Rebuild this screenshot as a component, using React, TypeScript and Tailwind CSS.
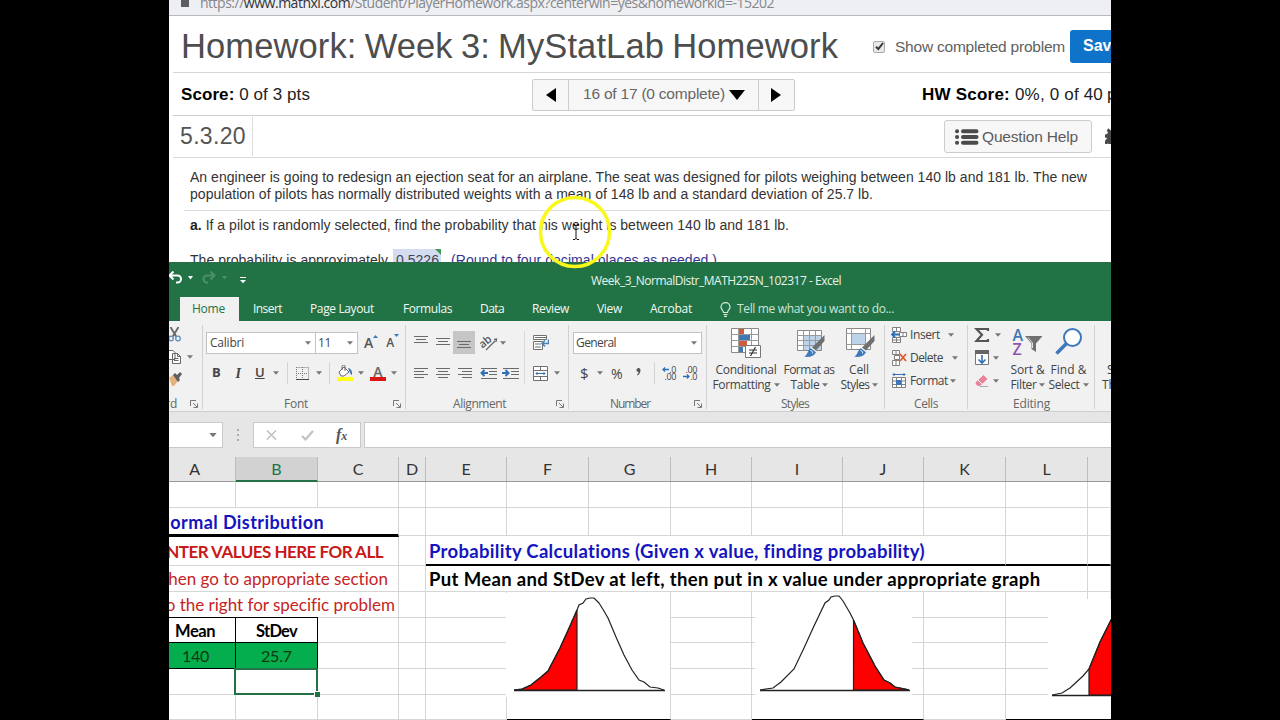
import { useLayoutEffect, useRef, type ReactNode } from "react";

type Kids = { children?: ReactNode };

/* Text set to an exact advance width by adjusting its tracking. */
function Fit({ w, className = "", children }: Kids & { w: number; className?: string }) {
  const ref = useRef<HTMLSpanElement>(null);
  useLayoutEffect(() => {
    const el = ref.current;
    if (!el) return;
    el.style.letterSpacing = "0px";
    const natural = el.getBoundingClientRect().width;
    const count = (el.textContent ?? "").length || 1;
    el.style.letterSpacing = `${(w - natural) / count}px`;
  }, [w]);
  return (
    <span ref={ref} className={`inline-block shrink-0 whitespace-pre ${className}`}>
      {children}
    </span>
  );
}

function Caret({ className = "" }: { className?: string }) {
  return (
    <svg className={`shrink-0 ${className}`} width="6" height="4" viewBox="0 0 6 4">
      <path d="M0 .3h6L3 3.7z" fill="#777" />
    </svg>
  );
}

function Launcher() {
  return (
    <svg className="mt-[2px] shrink-0" width="8" height="8" viewBox="0 0 8 8" fill="none" stroke="#777">
      <path d="M.5 6V.5H6M3 3l4 4M7.5 3.5v4h-4" />
    </svg>
  );
}

function Lines({ rows, w = 14 }: { rows: [number, number][]; w?: number }) {
  return (
    <svg className="shrink-0" width={w} height="12" viewBox={`0 0 ${w} 12`} stroke="#6a6a6a">
      {rows.map(([a, b], i) => (
        <path key={i} d={`M${a} ${i * 3 + 1.5}H${b}`} />
      ))}
    </svg>
  );
}

function Group({ className, children }: Kids & { className: string }) {
  return <div className={`flex h-[84px] shrink-0 flex-col border-r border-[#d2d2d2] ${className}`}>{children}</div>;
}

function AddressBar() {
  return (
    <div className="flex h-4 items-end overflow-hidden border-b border-[#b9babd] bg-[#eeeff3] pl-3">
      <div className="mb-[8px] h-[7px] w-[8px] bg-[#5c5e63]" />
      <Fit w={574} className="mb-[2px] ml-[11px] h-[20px] font-['Open_Sans',sans-serif] text-[14px] leading-[20px] text-[#85878b]">
        https://<span className="text-[#333]">www.mathxl.com</span>/Student/PlayerHomework.aspx?centerwin=yes&amp;homeworkid=-15202
      </Fit>
    </div>
  );
}

function HomeworkPage() {
  return (
    <div className="h-[246px] overflow-hidden bg-white font-['Liberation_Sans',sans-serif]">
      <div className="ml-1 flex h-[57px] items-center border-b border-[#d6d6d6] pl-[8px]">
        <Fit w={657} className="mt-[4px] text-[34.5px] leading-[40px] text-[#4d4d4d] [word-spacing:-1.5px]">Homework: Week 3: MyStatLab Homework</Fit>
        <div className="ml-[35px] mt-[5px] flex h-[12px] w-[12px] shrink-0 items-center justify-center rounded-[2px] border border-[#aaa] bg-[#e9e9e9]">
          <svg width="9" height="9" viewBox="0 0 9 9" fill="none" stroke="#333" strokeWidth="2">
            <path d="M1 4.8 3.3 7 8 1" />
          </svg>
        </div>
        <Fit w={170} className="ml-[10px] mt-[6px] text-[15.5px] text-[#606060]">Show completed problem</Fit>
        <div className="ml-[5px] mt-[4px] flex h-[33px] w-[80px] shrink-0 items-center rounded-[3px] bg-[#0f73c9] pl-[13px] text-[16px] font-bold text-white">
          Save
        </div>
      </div>
      <div className="ml-1 flex h-[43px] items-center border-b border-[#cfcfcf] pl-[8px] text-[17px] text-black">
        <Fit w={129} className="mt-px text-[#222]"><b className="text-black">Score:</b> 0 of 3 pts</Fit>
        <div className="ml-[222px] mt-px flex h-[32px] w-[263px] shrink-0 rounded-[2px] border border-[#ccc] bg-[#f7f7f7]">
          <div className="flex w-[36px] items-center justify-center border-r border-[#ccc] pl-px">
            <svg width="10" height="14" viewBox="0 0 10 14"><path d="M10 0v14L0 7z" /></svg>
          </div>
          <div className="flex w-[190px] items-center border-r border-[#ccc] pl-[14px]">
            <Fit w={142} className="-mt-px text-[15.5px] leading-[18px] text-[#666]">16 of 17 (0 complete)</Fit>
            <svg className="ml-[4px]" width="16" height="10" viewBox="0 0 16 10"><path d="M0 0h16L8 10z" /></svg>
          </div>
          <div className="flex flex-1 items-center justify-center">
            <svg width="10" height="14" viewBox="0 0 10 14"><path d="M0 0v14l10-7z" /></svg>
          </div>
        </div>
        <Fit w={88} className="ml-[127px] mt-px font-bold">HW Score:</Fit>
        <Fit w={88} className="ml-[5px] mt-px text-[#222]">0%, 0 of 40</Fit>
        <span className="ml-[4px] mt-px text-[#222]">pts</span>
      </div>
      <div className="ml-1 flex h-[42px] items-center border-b border-[#dadada] pl-[7px]">
        <Fit w={66} className="-mt-[2px] text-[23px] leading-[28px] text-[#555]">5.3.20</Fit>
        <div className="ml-[6px] h-[39px] w-px shrink-0 bg-[#ddd]" />
        <div className="ml-[691px] flex h-[33px] w-[148px] shrink-0 items-center rounded-[3px] border border-[#ccc] bg-[#f7f7f7] pl-[10px]">
          <svg width="24" height="16" viewBox="0 0 24 16" stroke="#4a4a4a" strokeWidth="4" strokeLinecap="round">
            <path d="M2 2.3h.1M8 2.3h13.5M2 8h.1M8 8h13.5M2 13.7h.1M8 13.7h13.5" />
          </svg>
          <Fit w={96} className="ml-[3px] text-[15.5px] leading-[20px] text-[#5c5c5c]">Question Help</Fit>
        </div>
        <svg className="-mt-px ml-[13px] shrink-0" width="16" height="16" viewBox="0 0 16 16" fill="#4a4a4a">
          <path d="M6.5 0h3l.4 2.2 2 .8 1.8-1.2 2 2-1.2 1.9.8 2 .7.1v3l-2 .4-.8 2 1.200 1.700-2 2-1.900-1.200-2 .8-.4 2h-3l-.5-2.200-2-.8-1.700 1.200-2-2 1.200-1.900L2.200 9.900 0 9.500v-3L2.200 6 2.900 4.200 1.700 2.300l2-2L5.500 2.500z" />
        </svg>
      </div>
      <div className="pt-[11px] text-[14px] leading-[17px] text-[#333]">
        <div className="pl-[21px]"><Fit w={897}>An engineer is going to redesign an ejection seat for an airplane. The seat was designed for pilots weighing between 140 lb and 181 lb. The new</Fit></div>
        <div className="pl-[21px]"><Fit w={683}>population of pilots has normally distributed weights with a mean of 148 lb and a standard deviation of 25.7 lb.</Fit></div>
        <div className="ml-[15px] mt-[7px] h-px bg-[#dcdcdc]" />
        <div className="mt-[6px] pl-[21px]"><Fit w={599}><b className="text-[#222]">a.</b> If a pilot is randomly selected, find the probability that his weight is between 140 lb and 181 lb.</Fit></div>
        <div className="mt-[15px] flex pl-[21px]">
          <Fit w={198} className="mt-[3px]">The probability is approximately</Fit>
          <div className="ml-[5px] flex h-[20px] w-[48px] justify-between bg-[#d3ddef] pl-[3px]">
            <Fit w={43} className="mt-[3px] text-[#445]">0.5226</Fit>
            <svg className="-ml-1 shrink-0" width="6" height="6" viewBox="0 0 6 6"><path d="M0 0h6v6z" fill="#3f9a55" /></svg>
          </div>
          <Fit w={266} className="ml-[10px] mt-[3px] text-[#34348e]">(Round to four decimal places as needed.)</Fit>
        </div>
      </div>
    </div>
  );
}

function TitleBar() {
  return (
    <div className="flex h-[35px] items-start border-t border-[#2c6a49] bg-[#217346] text-white">
      <svg className="-ml-px mt-[8px] shrink-0" width="15" height="13" viewBox="0 0 15 13" fill="none" stroke="#fff" strokeWidth="2">
        <path d="M5.500 .5 1.500 4.500l4 4M2 4.500h7.500a3.500 3.500 0 0 1 0 7H8" />
      </svg>
      <svg className="ml-[5px] mt-[13px]" width="5" height="4" viewBox="0 0 5 4"><path d="M0 0h5L2.500 3.500z" fill="#fff" /></svg>
      <svg className="ml-[9px] mt-[8px]" width="14" height="13" viewBox="0 0 14 13" fill="none" stroke="#4d9068" strokeWidth="2">
        <path d="m8.500 .5 4 4-4 4M12 4.500H5a3.500 3.500 0 0 0 0 7h1" />
      </svg>
      <svg className="ml-[6px] mt-[13px]" width="5" height="4" viewBox="0 0 5 4"><path d="M0 0h5L2.500 3.500z" fill="#4d9068" /></svg>
      <svg className="ml-[13px] mt-[14px]" width="6" height="7" viewBox="0 0 6 7" fill="#fff"><path d="M0 0h6v1H0zM0 3h6L3 6.300z" /></svg>
      <Fit w={250} className="ml-[345px] mt-[9px] text-[12px] leading-[18px] text-[#eaf3ed]">Week_3_NormalDistr_MATH225N_102317 - Excel</Fit>
    </div>
  );
}

function RibbonTabs() {
  return (
    <div className="flex h-[24px] items-center bg-[#217346] pl-[11px] text-[12px] leading-[18px] text-[#f3f8f5]">
      <div className="flex h-full w-[59px] items-center bg-[#f1f1f1] pl-[12px] text-[#217346]"><Fit w={33}>Home</Fit></div>
      <Fit w={29} className="ml-[14px]">Insert</Fit>
      <Fit w={64} className="ml-[28px]">Page Layout</Fit>
      <Fit w={49} className="ml-[29px]">Formulas</Fit>
      <Fit w={24} className="ml-[28px]">Data</Fit>
      <Fit w={37} className="ml-[28px]">Review</Fit>
      <Fit w={25} className="ml-[28px]">View</Fit>
      <Fit w={42} className="ml-[28px]">Acrobat</Fit>
      <svg className="ml-[28px] shrink-0" width="11" height="15" viewBox="0 0 11 15" fill="none" stroke="#d8eadf" strokeWidth="1.200">
        <path d="M3.500 10.500c0-2-2.500-2.800-2.500-5.400a4.500 4.500 0 0 1 9 0c0 2.600-2.500 3.400-2.500 5.400zM3.500 12.500h4M4 14.300h3" />
      </svg>
      <Fit w={157} className="ml-[6px] text-[#cfe3d7]">Tell me what you want to do...</Fit>
    </div>
  );
}

function ClipboardGroup() {
  return (
    <Group className="w-[34px]">
      <svg className="mt-[2px] shrink-0" width="13" height="15" viewBox="0 0 13 15" fill="none">
        <path d="m1.500 0 6 10M9.500 0l-6 10" stroke="#666" strokeWidth="1.800" />
        <circle cx="2" cy="11.500" r="2.300" stroke="#5f8fbf" strokeWidth="1.300" />
        <circle cx="9" cy="11.500" r="2.300" stroke="#5f8fbf" strokeWidth="1.300" />
      </svg>
      <div className="mt-[8px] flex items-center">
        <svg width="12" height="14" viewBox="0 0 12 14" fill="#fff" stroke="#666">
          <path d="M-1 .5h5l2 2v7h-7zM3.500 3.500h5l3 3v7h-8zM8.500 3.500v3h3M5 8.500h4.500M5 10.500h4.500" />
        </svg>
        <Caret className="ml-[6px]" />
      </div>
      <svg className="mt-[8px]" width="13" height="14" viewBox="0 0 13 14">
        <path d="m0 6 4-3 5 6-4 5H3z" fill="#e5b27c" />
        <path d="m4 3 2-2 2 2 3-3 2 2-3 4 1 2-2 2z" fill="#5e5e5e" />
      </svg>
      <div className="mt-auto flex h-[12px] items-center justify-between pr-[4px]">
        <span className="-ml-[4px] leading-[13px]">rd</span>
        <Launcher />
      </div>
    </Group>
  );
}

function FontGroup() {
  return (
    <Group className="w-[203px] pl-[3px] pt-[7px]">
      <div className="flex h-[22px] items-center">
        <div className="flex h-full w-[110px] items-center justify-between border border-[#c3c3c3] bg-white pl-[3px] pr-[4px] text-[#444]"><Fit w={34}>Calibri</Fit><Caret /></div>
        <div className="-ml-px flex h-full w-[43px] items-center justify-between border border-[#c3c3c3] bg-white pl-[2px] pr-[4px] text-[#444]"><Fit w={13}>11</Fit><Caret /></div>
        <div className="ml-[6px] flex items-start text-[#555]">
          <span className="text-[14px] font-semibold leading-[22px]">A</span>
          <svg className="mt-[3px] shrink-0" width="5" height="3" viewBox="0 0 5 3"><path d="M0 3h5L2.500 0z" fill="#3f76b5" /></svg>
        </div>
        <div className="ml-[8px] flex items-start text-[#555]">
          <span className="text-[12px] font-semibold leading-[24px]">A</span>
          <svg className="mt-[3px] shrink-0" width="5" height="3" viewBox="0 0 5 3"><path d="M0 0h5L2.500 3z" fill="#3f76b5" /></svg>
        </div>
      </div>
      <div className="mt-[8px] flex h-[22px] items-center text-[13px] text-[#444]">
        <b className="ml-[6px] w-[20px]">B</b>
        <i className="w-[23px] font-['Liberation_Serif',serif] text-[14px] font-bold">&nbsp;I</i>
        <span className="w-[9px] font-semibold underline">U</span>
        <Caret className="ml-[9px]" />
        <div className="ml-[8px] h-full w-px bg-[#d4d4d4]" />
        <svg className="ml-[8px] shrink-0" width="13" height="13" viewBox="0 0 13 13" fill="none" stroke="#777">
          <path d="M.5.500h12v12M.5 0v12M6.500 0v12M0 6.500h12" strokeDasharray="1 1" />
          <path d="M0 12.500h13" stroke="#444" />
        </svg>
        <Caret className="ml-[7px]" />
        <div className="ml-[7px] h-full w-px bg-[#d4d4d4]" />
        <svg className="ml-[7px] shrink-0" width="16" height="16" viewBox="0 0 16 16">
          <path d="m2 7 5-5 5 5-5 4H4z" fill="#fff" stroke="#666" />
          <path d="M5 5V1.500a1.500 1.500 0 0 1 3 0V6" fill="none" stroke="#666" />
          <path d="M11 3c3 .5 4.500 3 4 7-2-.5-2-3-4-7z" fill="#3c76b4" />
          <path d="M0 12h16v4H0z" fill="#ffff1a" />
        </svg>
        <Caret className="ml-[5px]" />
        <div className="ml-[6px] flex w-[16px] shrink-0 flex-col items-center">
          <span className="h-[12px] text-[14px] font-semibold leading-[13px] text-[#666]">A</span>
          <div className="h-[4px] w-[16px] bg-[#dc1414]" />
        </div>
        <Caret className="ml-[5px]" />
      </div>
      <div className="mt-auto flex h-[12px] items-center pl-[78px] pr-[4px] leading-[13px]">
        <Fit w={24}>Font</Fit><span className="ml-auto flex"><Launcher /></span>
      </div>
    </Group>
  );
}

function AlignmentGroup() {
  return (
    <Group className="w-[163px] pl-[7px] pt-[6px]">
      <div className="flex">
        <div className="w-[112px] border-r border-[#dadada]">
          <div className="flex h-[23px] items-center">
            <div className="ml-px -mt-[3px]"><Lines rows={[[0, 14], [2, 12], [0, 14]]} /></div>
            <div className="ml-[8px]"><Lines rows={[[0, 14], [2, 12], [0, 14]]} /></div>
            <div className="ml-[3px] flex h-[23px] w-[22px] items-center justify-center bg-[#c6c6c6] pt-[7px]"><Lines rows={[[0, 14], [2, 12], [0, 14]]} /></div>
            <svg className="ml-[5px] shrink-0" width="18" height="16" viewBox="0 0 18 16">
              <text x="0" y="11" fontSize="11" fontWeight="600" fill="#555" transform="rotate(-40 5 9)" className="font-['Open_Sans',sans-serif]">ab</text>
              <path d="m6 15 9-9m-1-1.500 2.500-.5L16 7" fill="none" stroke="#666" strokeWidth="1.300" />
            </svg>
            <Caret className="ml-[2px]" />
          </div>
          <div className="mt-[8px] flex h-[22px] items-center">
            <div className="ml-px"><Lines rows={[[0, 14], [0, 10], [0, 14], [0, 10]]} /></div>
            <div className="ml-[8px]"><Lines rows={[[0, 14], [2, 12], [0, 14], [2, 12]]} /></div>
            <div className="ml-[8px]"><Lines rows={[[0, 14], [4, 14], [0, 14], [4, 14]]} /></div>
            <svg className="ml-[8px] shrink-0" width="17" height="13" viewBox="0 0 17 13" fill="none" stroke="#6a6a6a">
              <path d="M1 1.500h16M9 4.500h8M9 7.500h8M1 11.500h16" /><path d="M8 6H1.500M4.500 3 1.500 6l3 3" stroke="#2f6fb5" strokeWidth="2" />
            </svg>
            <svg className="ml-[5px] shrink-0" width="17" height="13" viewBox="0 0 17 13" fill="none" stroke="#6a6a6a">
              <path d="M1 1.500h16M9 4.500h8M9 7.500h8M1 11.500h16" /><path d="M0 6h6.500M3.500 3l3 3-3 3" stroke="#2f6fb5" strokeWidth="2" />
            </svg>
          </div>
        </div>
        <div className="pl-[8px]">
          <div className="flex h-[23px] items-center">
            <svg width="16" height="16" viewBox="0 0 16 16" fill="#fff" stroke="#707070">
              <path d="M.5.500h13v4H.500zM.5 6.500h9v8H.500zM2 2.500h12M2 9h6M2 12h6" />
              <path d="M15.500 4.500v4h-6m2.500-3-3 3 3 3" fill="none" stroke="#4a80b8" strokeWidth="1.500" />
            </svg>
          </div>
          <div className="mt-[8px] flex h-[22px] items-center">
            <svg width="15" height="15" viewBox="0 0 15 15" fill="#fff" stroke="#707070">
              <path d="M.5.500h14v14H.500zM.5 4.500h14M.5 10.500h14M7.500.5v4M7.500 10.500v4" />
              <path d="M3 7.500h9M4.500 6 3 7.500 4.500 9M10.500 6 12 7.500 10.500 9" fill="none" stroke="#2f6fb5" />
            </svg>
            <Caret className="ml-[6px]" />
          </div>
        </div>
      </div>
      <div className="mt-auto flex h-[12px] items-center pl-[40px] pr-[4px] leading-[13px]">
        <Fit w={53}>Alignment</Fit><span className="ml-auto flex"><Launcher /></span>
      </div>
    </Group>
  );
}

function DecimalIcon({ decrease = false }: { decrease?: boolean }) {
  return (
    <span className="flex w-[15px] shrink-0 flex-col text-[9px] leading-[7px] tracking-[-0.4px] text-[#444]">
      <span className="flex h-[7px] items-center justify-end">
        {!decrease && <svg width="7" height="5" viewBox="0 0 7 5" fill="none" stroke="#2f6fb5" strokeWidth="1.300"><path d="M7 2.500H1M3 .5l-2 2 2 2" /></svg>}
        {decrease ? ".00" : ".0"}
      </span>
      <span className="flex h-[7px] items-center justify-end">
        {decrease && <svg width="7" height="5" viewBox="0 0 7 5" fill="none" stroke="#2f6fb5" strokeWidth="1.300"><path d="M0 2.500h6M4 .5l2 2-2 2" /></svg>}
        {decrease ? ".0" : ".00"}
      </span>
    </span>
  );
}

function NumberGroup() {
  return (
    <Group className="w-[138px] pl-[4px] pt-[7px]">
      <div className="flex h-[22px] w-[129px] items-center justify-between border border-[#c3c3c3] bg-white pl-[2px] pr-[4px] text-[#444]"><Fit w={40}>General</Fit><Caret /></div>
      <div className="mt-[8px] flex h-[22px] items-center text-[#444]">
        <span className="ml-[7px] w-[10px] text-[15px]">$</span>
        <Caret className="ml-[7px]" />
        <Fit w={13} className="ml-[8px] text-[14px]">%</Fit>
        <svg className="ml-[12px] -mt-[2px] shrink-0" width="5" height="8" viewBox="0 0 5 8"><path d="M.5 2a2 2 0 1 1 4 0c0 2.500-1 4.500-3 5.500L1 6.700C2 6 2.500 5 2.500 4 1.300 4 .5 3.200.5 2z" fill="#555" /></svg>
        <div className="ml-[13px] h-full w-px bg-[#d4d4d4]" />
        <div className="ml-[6px]"><DecimalIcon /></div>
        <div className="ml-[6px]"><DecimalIcon decrease /></div>
      </div>
      <div className="mt-auto flex h-[12px] items-center pl-[37px] pr-[4px] leading-[13px]">
        <Fit w={40}>Number</Fit><span className="ml-auto flex"><Launcher /></span>
      </div>
    </Group>
  );
}

function BrushOverlay() {
  return (
    <>
      <path d="M28.500 7v6l-9 10-4-3z" fill="#707070" />
      <path d="M8 28.500c4-1 3-6 7-8.500l5 4c-2 5-8 5.500-12 4.500z" fill="#3c78ba" />
      <path d="m15 19.500 5 4" stroke="#f1f1f1" strokeWidth="1.500" />
      <path d="M14.500 22.500c1.500.5 2.500 1 2 3" fill="none" stroke="#fff" />
    </>
  );
}

function StylesGroup() {
  return (
    <Group className="w-[178px] pl-[5px] pt-[3px]">
      <div className="flex text-[#444]">
        <div className="flex w-[68px] flex-col items-center">
          <svg width="30" height="30" viewBox="0 0 30 30" className="shrink-0">
            <path d="M.5.500h27v24H.500z" fill="#fff" stroke="#888" />
            <path d="M.5 6.500h27M.5 12.500h27M.5 18.500h27M7.500.5v24M20.500.5v24" stroke="#999" />
            <path d="M8 1h5v5H8zM8 13h8v5H8z" fill="#cf5a3c" />
            <path d="M8 7h11v5H8zM8 19h4v5H8z" fill="#3f78b4" />
            <path d="M14.500 17.500h15v12h-15z" fill="#fff" stroke="#777" />
            <path d="M18 22h8M18 25h8M24.500 19l-5 9" stroke="#333" strokeWidth="1.200" />
          </svg>
          <Fit w={61} className="mt-[4px] h-[15px] leading-[15px]">Conditional</Fit>
          <span className="flex h-[15px] items-center leading-[15px]"><Fit w={58}>Formatting</Fit><Caret className="ml-[3px]" /></span>
        </div>
        <div className="flex w-[58px] flex-col items-center">
          <svg width="30" height="30" viewBox="0 0 30 30" className="ml-[3px] shrink-0">
            <path d="M1.500 2.500h24v20h-24z" fill="#fff" stroke="#888" />
            <path d="M8 8h17v14H8z" fill="#bcd3ea" />
            <path d="M1.500 7.500h24M1.500 12.500h24M1.500 17.500h24M7.500 2.500v20M13.500 2.500v20M19.500 2.500v20" stroke="#9a9a9a" />
            <BrushOverlay />
          </svg>
          <Fit w={51} className="mt-[4px] h-[15px] leading-[15px]">Format as</Fit>
          <span className="flex h-[15px] items-center leading-[15px]"><Fit w={29}>Table</Fit><Caret className="ml-[2px]" /></span>
        </div>
        <div className="flex w-[42px] flex-col items-center">
          <svg width="30" height="30" viewBox="0 0 30 30" className="ml-[3px] shrink-0">
            <path d="M.5.500h24v21H.500z" fill="#fff" stroke="#888" />
            <path d="M.5 5.500h24M.5 16.500h24M5.500.5v21M19.500.5v21" stroke="#9a9a9a" />
            <path d="M6 6h13v10H6z" fill="#bcd3ea" />
            <BrushOverlay />
          </svg>
          <Fit w={20} className="mt-[4px] h-[15px] leading-[15px]">Cell</Fit>
          <span className="flex h-[15px] items-center leading-[15px]"><Fit w={29}>Styles</Fit><Caret className="ml-[2px]" /></span>
        </div>
      </div>
      <div className="mt-auto flex h-[12px] justify-center pr-[6px] leading-[13px]"><Fit w={28}>Styles</Fit></div>
    </Group>
  );
}

function CellsGroup() {
  return (
    <Group className="w-[83px] pl-[6px]">
      <div className="-mt-px flex h-[22px] items-center text-[#444]">
        <svg width="16" height="16" viewBox="0 0 16 16" fill="#fff" stroke="#808080">
          <path d="M1.500.5h8v4h-8zM5.500.5v4M1.500 10.500h8v5h-8zM5.500 10.500v5M1.500 13h8M8.500 5.500h7v4h-7zM12 5.500v4" /><path d="M9 7.500H1M4 4.500l-3 3 3 3" fill="none" stroke="#2f6fb5" strokeWidth="1.800" />
        </svg>
        <Fit w={30} className="ml-[3px]">Insert</Fit><Caret className="ml-[8px]" />
      </div>
      <div className="flex h-[23px] items-center text-[#444]">
        <svg width="16" height="16" viewBox="0 0 16 16" fill="#fff" stroke="#808080">
          <path d="M1.500.5h7v4h-7zM5 .5v4M1.500 10.500h7v5h-7zM5 10.500v5M3.500 5.500h5v4h-5z" /><path d="m9 4 6 7M15 4l-6 7" stroke="#dd5b33" strokeWidth="1.800" />
        </svg>
        <Fit w={33} className="ml-[3px]">Delete</Fit><Caret className="ml-[9px]" />
      </div>
      <div className="flex h-[23px] items-center text-[#444]">
        <svg width="16" height="16" viewBox="0 0 16 16" fill="#fff" stroke="#808080">
          <path d="M1.500 4.500h13v10h-13zM5.500 4.500v10M10.500 4.500v10M1.500 8h13M1.500 11.500h13" /><path d="M5 7h5v5H5z" fill="#3c76b4" stroke="none" /><path d="M2 1.500h12M3.500 0 2 1.500 3.500 3M12.500 0 14 1.500 12.500 3" fill="none" stroke="#2f6fb5" />
        </svg>
        <Fit w={38} className="ml-[3px]">Format</Fit><Caret className="ml-[2px]" />
      </div>
      <div className="mt-auto flex h-[12px] pl-[23px] leading-[13px]"><Fit w={24}>Cells</Fit></div>
    </Group>
  );
}

function EditingGroup() {
  return (
    <Group className="w-[127px] pl-[6px]">
      <div className="flex text-[#444]">
        <div className="-mt-px w-[30px] shrink-0">
          <div className="flex h-[22px] items-center">
            <svg width="16" height="16" viewBox="0 0 16 16" fill="none" stroke="#555" strokeWidth="2.200"><path d="M14 4V2H2.500l5.500 5.800L2.500 14H14v-2" /></svg>
            <Caret className="ml-[5px]" />
          </div>
          <div className="flex h-[23px] items-center">
            <svg className="ml-px" width="14" height="15" viewBox="0 0 14 15"><path d="M.5.500h13v14H.500z" fill="#fff" stroke="#777" /><path d="M0 0h14v4H0z" fill="#666" /><path d="M7 5v7.500M3.500 9.500 7 13l3.500-3.500" fill="none" stroke="#2f6fb5" strokeWidth="1.600" /></svg>
            <Caret className="ml-[4px]" />
          </div>
          <div className="flex h-[23px] items-center">
            <svg className="ml-px" width="14" height="14" viewBox="0 0 14 14"><path d="m1 8 7.500-7 4 4L5 12H3L.5 10z" fill="#e9839a" /><path d="m3 6 4 4" stroke="#fff" /><path d="M5 12.500h8" stroke="#aaa" /></svg>
            <Caret className="ml-[4px]" />
          </div>
        </div>
        <div className="flex w-[43px] flex-col items-center pl-[4px] pt-[3px]">
          <div className="flex h-[30px] w-[30px]">
            <span className="flex w-[12px] flex-col text-[16px] font-semibold leading-[14px]"><span className="text-[#3f78b4]">A</span><span className="text-[#8d55b0]">Z</span></span>
            <svg className="mt-[8px] shrink-0" width="18" height="17" viewBox="0 0 18 17"><path d="M0 0h17.500L11 7.500V16L6.500 13V7.500z" fill="#707070" /><path d="m3 1.500 4.500 5.500v5" fill="none" stroke="#ddd" /></svg>
          </div>
          <Fit w={34} className="mt-[4px] h-[15px] leading-[15px]">Sort &amp;</Fit>
          <span className="flex h-[15px] items-center leading-[15px]"><Fit w={26}>Filter</Fit><Caret className="ml-[2px]" /></span>
        </div>
        <div className="flex w-[43px] flex-col items-center pt-[3px]">
          <svg width="28" height="30" viewBox="0 0 28 30" className="shrink-0"><circle cx="17.500" cy="9.500" r="8.500" fill="#fff" stroke="#3c78ba" strokeWidth="2" /><path d="m11.500 15.500-10 10" stroke="#3c78ba" strokeWidth="3.500" /></svg>
          <Fit w={36} className="mt-[4px] h-[15px] leading-[15px]">Find &amp;</Fit>
          <span className="flex h-[15px] items-center leading-[15px]"><Fit w={31}>Select</Fit><Caret className="ml-[3px]" /></span>
        </div>
      </div>
      <div className="mt-auto flex h-[12px] pl-[39px] leading-[13px]"><Fit w={37}>Editing</Fit></div>
    </Group>
  );
}

function Ribbon() {
  return (
    <div className="flex h-[91px] overflow-hidden border-b border-[#cfcfcf] bg-[#f1f1f1] pt-[4px] text-[12px] text-[#666]">
      <ClipboardGroup />
      <FontGroup />
      <AlignmentGroup />
      <NumberGroup />
      <StylesGroup />
      <CellsGroup />
      <EditingGroup />
      <div className="flex flex-col pl-[7px] pt-[37px] leading-[15px] text-[#444]"><span className="pl-[5px]">Sign</span><span>This</span></div>
    </div>
  );
}

function FormulaBar() {
  return (
    <div className="flex h-[37px] items-center bg-[#e6e6e6] pb-px pt-[10px] text-[#666]">
      <div className="flex h-[26px] w-[54px] shrink-0 items-center justify-end border border-l-0 border-[#c9c9c9] bg-white pr-[6px]"><Caret className="scale-125" /></div>
      <svg className="ml-[14px]" width="2" height="12" viewBox="0 0 2 12" fill="#aaa"><path d="M0 0h2v2H0zM0 5h2v2H0zM0 10h2v2H0z" /></svg>
      <div className="ml-[14px] flex h-[26px] w-[108px] items-center border border-[#c9c9c9] bg-white pl-[12px]">
        <svg width="11" height="10" viewBox="0 0 12 11" stroke="#c2c2c2" strokeWidth="1.700"><path d="m1 .5 10 10M11 .5l-10 10" /></svg>
        <svg className="ml-[24px]" width="13" height="11" viewBox="0 0 13 11" fill="none" stroke="#c2c2c2" strokeWidth="2.200"><path d="M1 6l3.500 3.500L12 1" /></svg>
        <i className="ml-[22px] font-['Liberation_Serif',serif] text-[16px] font-bold leading-[18px] text-[#555]">f<span className="text-[12px]">x</span></i>
      </div>
      <div className="ml-[3px] h-[26px] flex-1 border border-r-0 border-[#c9c9c9] bg-white" />
    </div>
  );
}

const GRID = "grid grid-cols-[67px_82px_81px_27px_81px_82px_82px_81px_91px_81px_82px_82px_23px]";
const LETTERS = ["A", "B", "C", "D", "E", "F", "G", "H", "I", "J", "K", "L", ""];

function ColumnHeaders() {
  return (
    <div className={`${GRID} h-[33px] border-b border-[#9b9b9b] bg-[#e6e6e6] pt-[8px] text-[16px] leading-[24px] text-[#333]`}>
      {LETTERS.map((letter, i) => (
        <div
          key={i}
          className={
            letter === "B"
              ? "-mb-px h-[25px] border-b-2 border-r border-b-[#217346] border-r-[#bbb] bg-[#d2d2d2] text-center text-[#217346]"
              : letter === "A"
                ? "border-r border-[#bdbdbd] pr-[35px] text-right"
                : "border-r border-[#bdbdbd] text-center last:border-r-0"
          }
        >
          {letter}
        </div>
      ))}
    </div>
  );
}

function Blank({ n }: { n: number }) {
  return (
    <>
      {Array.from({ length: n }, (_, i) => (
        <div key={i} className="border-b border-r border-[#d6d6d6]" />
      ))}
    </>
  );
}

function Wide({ className, children }: Kids & { className: string }) {
  return <div className={`flex items-center border-b border-r border-[#d6d6d6] ${className}`}>{children}</div>;
}

function BellCurve({ className, curve, fill, base }: { className: string; curve: string; fill: string; base: string }) {
  return (
    <svg className={`absolute bg-white ${className}`} fill="none" stroke="#222" strokeWidth="1.200">
      <path d={fill} fill="#fe0000" />
      <path d={curve} />
      <path d={base} strokeWidth="1.600" />
    </svg>
  );
}

function Sheet() {
  return (
    <div className="h-[238px] w-[942px] overflow-hidden bg-white">
      <div className="relative w-[943px]">
        <div className={`${GRID} h-[238px] grid-rows-[26px_28px_30px_26px_26px_25px_26px_26px_25px] text-[17px] leading-[22px]`}>
          <Blank n={13} />

          <Wide className="z-10 col-span-3 -mb-px justify-end border-b-[3px] border-b-black pr-[74px] pt-[2px] text-[18px] font-bold text-[#1414c0]"><Fit w={168}>Normal Distribution</Fit></Wide>
          <Blank n={10} />

          <Wide className="col-span-3 justify-end pr-[15px] pt-[2px] font-bold text-[#c81818]"><Fit w={226}>ENTER VALUES HERE FOR ALL</Fit></Wide>
          <Blank n={1} />
          <Wide className="col-span-6 border-b-2 border-r-0 border-b-black pl-[3px] pt-[2px] text-[18.5px] font-bold text-[#1414c0]"><Fit w={496}>Probability Calculations (Given x value, finding probability)</Fit></Wide>
          <Wide className="border-b-2 border-b-black">{null}</Wide>
          <Wide className="border-b-2 border-b-black">{null}</Wide>
          <Wide className="border-b-2 border-b-black">{null}</Wide>

          <Wide className="col-span-3 justify-end pr-[10px] text-[#c42424]"><Fit w={230}>Then go to appropriate section</Fit></Wide>
          <Blank n={1} />
          <Wide className="col-span-8 pl-[3px] text-[18.5px] font-bold text-black"><Fit w={611}>Put Mean and StDev at left, then put in x value under appropriate graph</Fit></Wide>
          <Blank n={1} />

          <Wide className="col-span-3 justify-end pr-[3px] text-[#c42424]"><Fit w={235}>to the right for specific problem</Fit></Wide>
          <Blank n={10} />

          <Wide className="-mt-px border-t border-black pl-[6px] pt-px text-[16.5px] font-bold text-black"><Fit w={40}>Mean</Fit></Wide>
          <Wide className="-mt-px justify-center border-t border-black pt-px text-[16.5px] font-bold text-black"><Fit w={41}>StDev</Fit></Wide>
          <Blank n={11} />

          <Wide className="border-black bg-[#04ad4e] pl-[13px] text-[16px] text-[#12380f]"><Fit w={27}>140</Fit></Wide>
          <Wide className="justify-center border-black bg-[#04ad4e] text-[16px] text-[#12380f]"><Fit w={31}>25.7</Fit></Wide>
          <Blank n={11} />

          <Blank n={13} />

          <Blank n={5} />
          <div className="col-span-2 border-b border-r border-b-black border-r-[#d6d6d6]" />
          <Blank n={1} />
          <div className="col-span-2 border-b border-r border-b-black border-r-[#d6d6d6]" />
          <Blank n={1} />
          <div className="col-span-2 border-b border-b-black" />
        </div>

        <div className="absolute left-[65px] top-[186px] h-[27px] w-[84px] border-2 border-[#217346]" />
        <div className="absolute left-[145px] top-[209px] h-[6px] w-[6px] border-l border-t border-white bg-[#217346]" />

        <BellCurve
          className="left-[337px] top-[111px] h-[104px] w-[164px]"
          fill="M8 97 16 96 25 92 35 84 42 78 54 55 64 33 71 17V97z"
          curve="M8 97 16 96 25 92 35 84 42 78 54 55 64 33 71 17 73 12 77 10 80 6 84 5H88L93 10 Q97 16 102 25L110 44 118 62 126 77 133 87 138 89 144 94 152 95 158 97"
          base="M8 97.500H159"
        />
        <BellCurve
          className="left-[586px] top-[111px] h-[104px] w-[157px]"
          fill="M98.500 27 108 50 120 73 129 87 135 90 140 94 150 96 154 97H98.500z"
          curve="M5 97 18 95 26 89 39 76 49 55 59 33 70 10 74 7 76 4 80 3H84L88 8 95 20 98.500 27 108 50 120 73 129 87 135 90 140 94 150 96 154 97"
          base="M5 97.500H155"
        />
        <BellCurve
          className="left-[879px] top-[117px] h-[101px] w-[64px]"
          fill="M41 70 52 43 65 17V96H41z"
          curve="M4 96 14 94 22 89 35 77 41 70 52 43 65 17"
          base="M4 96.500H65"
        />
      </div>
    </div>
  );
}

function Excel() {
  return (
    <div className="h-[458px] font-['Open_Sans',sans-serif]">
      <TitleBar />
      <RibbonTabs />
      <Ribbon />
      <FormulaBar />
      <div className="font-['Lato',sans-serif]">
        <ColumnHeaders />
        <Sheet />
      </div>
    </div>
  );
}

export default function App() {
  return (
    <div className="flex h-[720px] w-[1280px] overflow-hidden bg-black pl-[169px]">
      <main className="relative h-[720px] w-[942px] overflow-hidden">
        <AddressBar />
        <HomeworkPage />
        <Excel />
        <svg className="absolute left-[369px] top-[195px]" width="74" height="74" viewBox="0 0 74 74" fill="none">
          <circle cx="37" cy="37" r="34.500" stroke="#f8f81c" strokeWidth="3.500" />
          <path d="M35 29.500h2l1 1 1-1h2M38 30v14M35 44.500h2l1-1 1 1h2" stroke="#111" />
        </svg>
      </main>
    </div>
  );
}
